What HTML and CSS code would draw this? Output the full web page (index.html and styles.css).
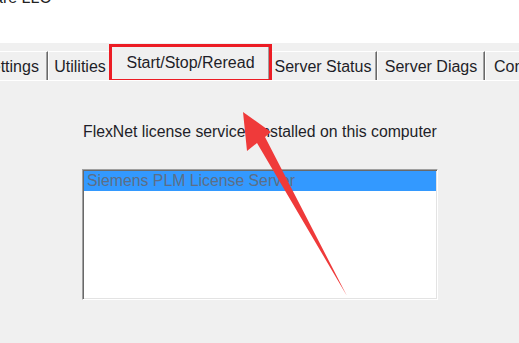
FILE: index.html
```html
<!DOCTYPE html>
<html>
<head>
<meta charset="utf-8">
<link rel="stylesheet" href="styles.css">
</head>
<body>
<div class="page">
  <div class="header">
    <div class="company">Software LLC</div>
  </div>
  <div class="tabbar">
    <div class="tab tab-settings">Settings</div>
    <div class="tab tab-utilities">Utilities</div>
    <div class="tab tab-active">Start/Stop/Reread</div>
    <div class="tab tab-status">Server Status</div>
    <div class="tab tab-diags">Server Diags</div>
    <div class="tab tab-config">Config Services</div>
  </div>
  <div class="panel">
    <p class="label">FlexNet license services installed on this computer</p>
    <div class="listbox">
      <div class="item selected">Siemens PLM License Server</div>
    </div>
  </div>
  <svg class="arrow" width="519" height="343" viewBox="0 0 519 343">
    <polygon points="243,112 271,132 265,137 347,296 257,143 247,151" fill="#ef3a3a"/>
  </svg>
</div>
</body>
</html>
```
FILE: styles.css
```css
* { box-sizing: border-box; }
html, body { margin: 0; padding: 0; }
body {
  width: 519px;
  height: 343px;
  overflow: hidden;
  background: #f0f0f0;
  font-family: "Liberation Sans", Arial, sans-serif;
  font-size: 16px;
  color: #1e1e28;
}
.page { position: relative; width: 519px; height: 343px; }
.header {
  height: 43px;
  background: #ffffff;
  overflow: hidden;
}
.company {
  margin-top: -11px;
  margin-left: -46px;
  line-height: 18px;
  white-space: nowrap;
  color: #222;
}
.tabbar {
  height: 37px;
  display: flex;
  align-items: flex-end;
  overflow: hidden;
  white-space: nowrap;
}
.tab {
  flex: none;
  height: 29px;
  display: flex;
  align-items: center;
  justify-content: center;
  background: #f0f0f0;
  border-top: 1px solid #ffffff;
  border-left: 1px solid #ffffff;
  border-right: 1px solid #696969;
  box-shadow: inset -1px 0 0 #a0a0a0;
  padding-top: 1px;
}
.tab-settings { width: 76px; margin-left: -28px; }
.tab-utilities { width: 63px; border-right: none; box-shadow: none; }
.tab-active {
  width: 159px;
  height: 34px;
  padding-bottom: 3px;
  outline: 3px solid #ec1c24;
  outline-offset: -1px;
  position: relative;
  z-index: 1;
}
.tab-status { width: 107px; border-left: none; }
.tab-diags { width: 108px; }
.tab-config { width: 120px; justify-content: flex-start; padding-left: 8px; }
.panel {
  height: 263px;
  border-top: 1px solid #ffffff;
  padding: 42px 0 0 83px;
}
.label {
  margin: 0;
  line-height: 18px;
  font-size: 15.8px;
}
.listbox {
  margin-top: 28px;
  margin-left: -1px;
  width: 356px;
  height: 131px;
  background: #ffffff;
  border: 1px solid;
  border-color: #a0a0a0 #ffffff #ffffff #a0a0a0;
  box-shadow: inset 1px 1px 0 #696969, inset -1px -1px 0 #e3e3e3;
  padding: 1px 1px 1px 1px;
}
.item {
  height: 20px;
  line-height: 20px;
  padding-left: 3px;
  font-size: 15.8px;
  white-space: nowrap;
}
.selected {
  background: #3399ff;
  color: #5d6e86;
}
.arrow {
  position: absolute;
  left: 0;
  top: 0;
  pointer-events: none;
}
```
